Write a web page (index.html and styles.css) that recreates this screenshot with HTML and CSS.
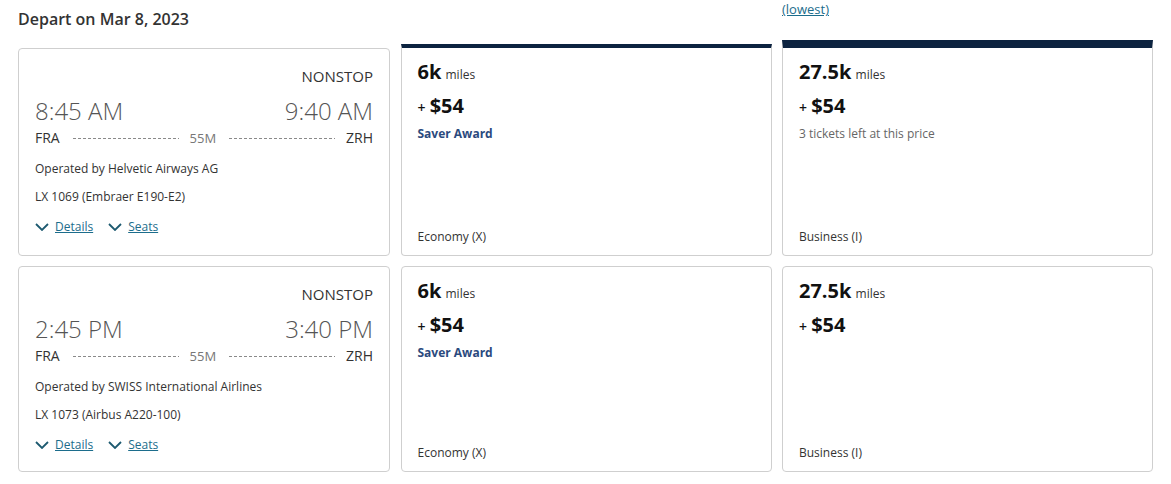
FILE: index.html
```html
<!DOCTYPE html>
<html lang="en">
<head>
<meta charset="utf-8">
<title>Flights</title>
<link rel="stylesheet" href="styles.css">
</head>
<body>
<div class="results">
  <div class="head-title">Depart on Mar 8, 2023</div>
  <div class="head-empty"></div>
  <div class="head-lowest"><a href="#">(lowest)</a></div>

  <div class="flight">
    <div class="stops">NONSTOP</div>
    <div class="times"><span>8:45 AM</span><span>9:40 AM</span></div>
    <div class="route">
      <span class="ap">FRA</span><span class="dash"></span><span class="dur">55M</span><span class="dash"></span><span class="ap">ZRH</span>
    </div>
    <div class="info">Operated by Helvetic Airways AG</div>
    <div class="info">LX 1069 (Embraer E190-E2)</div>
    <div class="links">
      <a href="#" class="toggle"><svg class="chev" viewBox="0 0 14 8" width="14" height="8"><path d="M1 1 L7 7 L13 1" fill="none" stroke="currentColor" stroke-width="1.8"/></svg><span>Details</span></a>
      <a href="#" class="toggle"><svg class="chev" viewBox="0 0 14 8" width="14" height="8"><path d="M1 1 L7 7 L13 1" fill="none" stroke="currentColor" stroke-width="1.8"/></svg><span>Seats</span></a>
    </div>
  </div>
  <div class="fare bar-thin">
    <div class="miles"><b>6k</b> <span>miles</span></div>
    <div class="cash"><span class="plus">+</span> <b>$54</b></div>
    <div class="saver">Saver Award</div>
    <div class="cabin">Economy (X)</div>
  </div>
  <div class="fare bar-thick">
    <div class="miles"><b>27.5k</b> <span>miles</span></div>
    <div class="cash"><span class="plus">+</span> <b>$54</b></div>
    <div class="left">3 tickets left at this price</div>
    <div class="cabin">Business (I)</div>
  </div>

  <div class="flight row2">
    <div class="stops">NONSTOP</div>
    <div class="times"><span>2:45 PM</span><span>3:40 PM</span></div>
    <div class="route">
      <span class="ap">FRA</span><span class="dash"></span><span class="dur">55M</span><span class="dash"></span><span class="ap">ZRH</span>
    </div>
    <div class="info">Operated by SWISS International Airlines</div>
    <div class="info">LX 1073 (Airbus A220-100)</div>
    <div class="links">
      <a href="#" class="toggle"><svg class="chev" viewBox="0 0 14 8" width="14" height="8"><path d="M1 1 L7 7 L13 1" fill="none" stroke="currentColor" stroke-width="1.8"/></svg><span>Details</span></a>
      <a href="#" class="toggle"><svg class="chev" viewBox="0 0 14 8" width="14" height="8"><path d="M1 1 L7 7 L13 1" fill="none" stroke="currentColor" stroke-width="1.8"/></svg><span>Seats</span></a>
    </div>
  </div>
  <div class="fare row2">
    <div class="miles"><b>6k</b> <span>miles</span></div>
    <div class="cash"><span class="plus">+</span> <b>$54</b></div>
    <div class="saver">Saver Award</div>
    <div class="cabin">Economy (X)</div>
  </div>
  <div class="fare row2">
    <div class="miles"><b>27.5k</b> <span>miles</span></div>
    <div class="cash"><span class="plus">+</span> <b>$54</b></div>
    <div class="cabin">Business (I)</div>
  </div>
</div>
</body>
</html>
```

FILE: styles.css
```css
* { box-sizing: border-box; }

body {
  margin: 0;
  background: #fff;
  font-family: "Open Sans", "Noto Sans", sans-serif;
  color: #333;
}

.results {
  display: grid;
  grid-template-columns: 372px 371px 371px;
  grid-template-rows: 40px 216px 216px;
  column-gap: 10.5px;
  row-gap: 0;
  padding-left: 18px;
}

.head-title {
  font-size: 16px;
  font-weight: 600;
  line-height: 22px;
  padding-top: 8px;
  color: #333;
}

.head-lowest {
  font-size: 13px;
  line-height: 18px;
  padding-top: 0;
}

.head-lowest a {
  color: #1c6d8c;
  text-decoration: underline;
}

.flight {
  margin-top: 8px;
  border: 1px solid #cfcfcf;
  border-radius: 4px;
  padding: 17px 16px 0 16px;
}

.row2 {
  margin-top: 10px;
}

.stops {
  text-align: right;
  font-size: 15px;
  line-height: 20px;
  color: #333;
}

.times {
  display: flex;
  justify-content: space-between;
  margin-top: 9px;
  font-size: 24px;
  font-weight: 300;
  line-height: 32px;
  color: #555;
}

.route {
  display: flex;
  align-items: center;
  font-size: 14px;
  line-height: 20px;
  margin-top: 1px;
}

.ap { color: #333; }

.dash {
  flex: 1;
  height: 1px;
  margin: 1px 11px 0 13px;
  background: repeating-linear-gradient(to right, #8a8a8a 0 3px, transparent 3px 5px);
}

.dur {
  color: #777;
  font-size: 13px;
}

.info {
  font-size: 12px;
  line-height: 18px;
  margin-top: 12px;
  color: #333;
}

.info + .info { margin-top: 10px; }

.links {
  display: flex;
  gap: 15px;
  margin-top: 12px;
  font-size: 12px;
  line-height: 18px;
}

.toggle {
  display: flex;
  align-items: center;
  gap: 6px;
  color: #1c6d8c;
  text-decoration: none;
}

.toggle span { text-decoration: underline; }

.chev {
  color: #1d5a70;
  display: block;
}

.fare {
  display: flex;
  flex-direction: column;
  border: 1px solid #cfcfcf;
  border-radius: 4px;
  padding: 11px 16px 9px 16px;
}

.fare.bar-thin {
  margin-top: 4px;
  border-top: 4px solid #0c2340;
  border-radius: 0 0 4px 4px;
}

.fare.bar-thick {
  border-top: 8px solid #0c2340;
  border-radius: 0 0 4px 4px;
}

.fare.row2 { padding-top: 11px; }

.miles {
  line-height: 25px;
  color: #111;
}

.miles b {
  font-size: 20px;
  font-weight: 700;
}

.miles span {
  font-size: 12px;
  color: #333;
}

.cash {
  margin-top: 6px;
  line-height: 25px;
  color: #111;
}

.cash .plus {
  font-size: 14px;
  font-weight: 600;
}

.cash b {
  font-size: 20px;
  font-weight: 700;
}

.saver {
  margin-top: 5px;
  font-size: 12px;
  font-weight: 700;
  line-height: 18px;
  color: #2b4a7e;
}

.left {
  margin-top: 5px;
  font-size: 12px;
  line-height: 18px;
  color: #666;
}

.cabin {
  margin-top: auto;
  font-size: 12px;
  line-height: 18px;
  color: #333;
}
```
